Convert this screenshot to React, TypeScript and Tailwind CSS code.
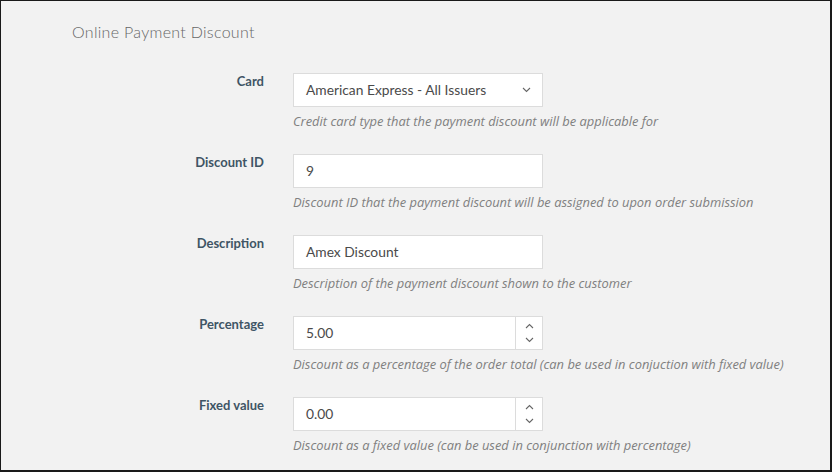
import React from 'react'

type Field = {
  label: string
  value: string
  help: string
  kind: 'select' | 'text' | 'number'
}

const FIELDS: Field[] = [
  {
    label: 'Card',
    value: 'American Express - All Issuers',
    help: 'Credit card type that the payment discount will be applicable for',
    kind: 'select',
  },
  {
    label: 'Discount ID',
    value: '9',
    help: 'Discount ID that the payment discount will be assigned to upon order submission',
    kind: 'text',
  },
  {
    label: 'Description',
    value: 'Amex Discount',
    help: 'Description of the payment discount shown to the customer',
    kind: 'text',
  },
  {
    label: 'Percentage',
    value: '5.00',
    help: 'Discount as a percentage of the order total (can be used in conjuction with fixed value)',
    kind: 'number',
  },
  {
    label: 'Fixed value',
    value: '0.00',
    help: 'Discount as a fixed value (can be used in conjunction with percentage)',
    kind: 'number',
  },
]

function Chevron({ up = false }: { up?: boolean }) {
  return (
    <svg width="9" height="6" viewBox="0 0 9 6" fill="none" className="block">
      <path
        d={up ? 'M1 5L4.5 1.5L8 5' : 'M1 1L4.5 4.5L8 1'}
        stroke="#666"
        strokeWidth="1.1"
      />
    </svg>
  )
}

function Control({ field }: { field: Field }) {
  return (
    <div className="flex h-[34px] w-[250px] items-center border border-[#dcdcdc] bg-white text-[13.8px] text-[#4a4a4a]">
      <span className="flex-1 pl-[12px]">{field.value}</span>
      {field.kind === 'select' && (
        <span className="pr-[11px]">
          <Chevron />
        </span>
      )}
      {field.kind === 'number' && (
        <span className="flex h-full w-[27px] flex-col items-center justify-center gap-[8px] border-l border-[#dcdcdc]">
          <Chevron up />
          <Chevron />
        </span>
      )}
    </div>
  )
}

export default function App() {
  return (
    <div
      className="h-[472px] w-[832px] overflow-hidden border-t border-l border-r-2 border-b-2 border-[#1a1a1a] bg-[#f2f2f2]"
      style={{ fontFamily: 'Lato, "Noto Sans", sans-serif' }}
    >
      {/* Titel */}
      <div className="pl-[71px] pt-[21px] text-[16px] leading-[20px] text-[#666] font-light tracking-[0.3px]">
        Online Payment Discount
      </div>

      <div className="mt-[31px]">
        {FIELDS.map((f) => (
          <div key={f.label} className="flex h-[81px] gap-[29px]">
            <div className="w-[263px] text-right text-[13px] leading-[16px] font-bold text-[#3f5565]">
              {f.label}
            </div>
            <div>
              <Control field={f} />
              <div
                className="mt-[6px] whitespace-nowrap text-[12.9px] leading-[16px] italic text-[#808080]"
                style={{ fontFamily: '"Open Sans", sans-serif' }}
              >
                {f.help}
              </div>
            </div>
          </div>
        ))}
      </div>
    </div>
  )
}
